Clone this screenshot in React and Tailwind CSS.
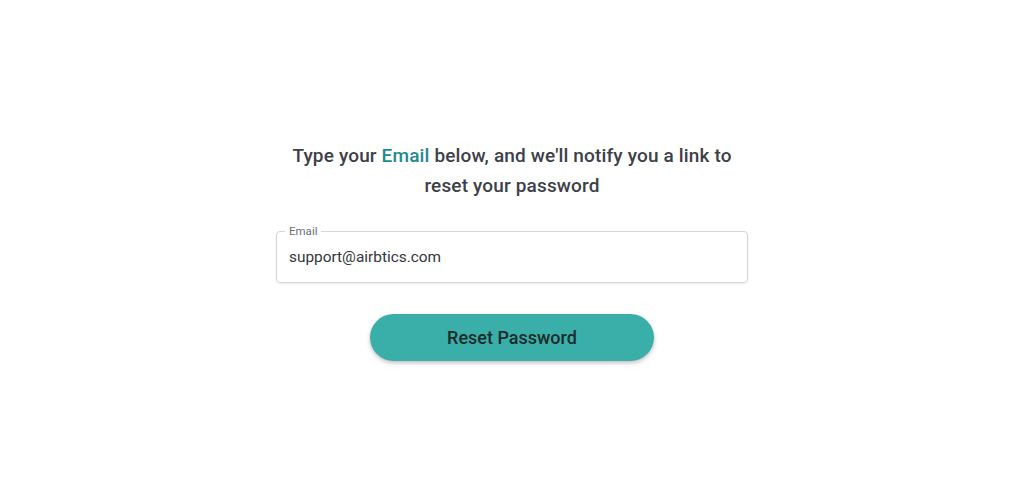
import React from "react";

const App = () => {
  return (
    <main className="flex min-h-[492px] w-full justify-center bg-white font-['Roboto',sans-serif]">
      <div className="mt-[141px] flex w-[472px] flex-col items-center">
        <h1 className="whitespace-nowrap text-center text-[19px] font-medium leading-[30px] tracking-[0.15px] text-[#3c4048]">
          Type your <span className="text-[#1f8a90]">Email</span> below, and
          we&apos;ll notify you a link to
          <br />
          reset your password
        </h1>

        <fieldset className="mt-[24px] h-[58px] w-full rounded-[4px] border border-[#d6d6d6] px-[8px] shadow-[0_1px_2px_rgba(0,0,0,0.08)]">
          <legend className="px-[4px] text-[11.5px] leading-[12px] text-[#6b6f75]">
            Email
          </legend>
          <input
            type="email"
            defaultValue="support@airbtics.com"
            className="mt-[10px] w-full bg-transparent px-[4px] text-[15.4px] leading-[20px] text-[#33363b] outline-none"
          />
        </fieldset>

        <button
          type="button"
          className="mt-[31px] h-[47px] w-[284px] rounded-full bg-[#3aafa9] text-[18px] font-medium text-[#1d2a2a] shadow-[0_2px_4px_rgba(0,0,0,0.25)]"
        >
          Reset Password
        </button>
      </div>
    </main>
  );
};

export default App;
